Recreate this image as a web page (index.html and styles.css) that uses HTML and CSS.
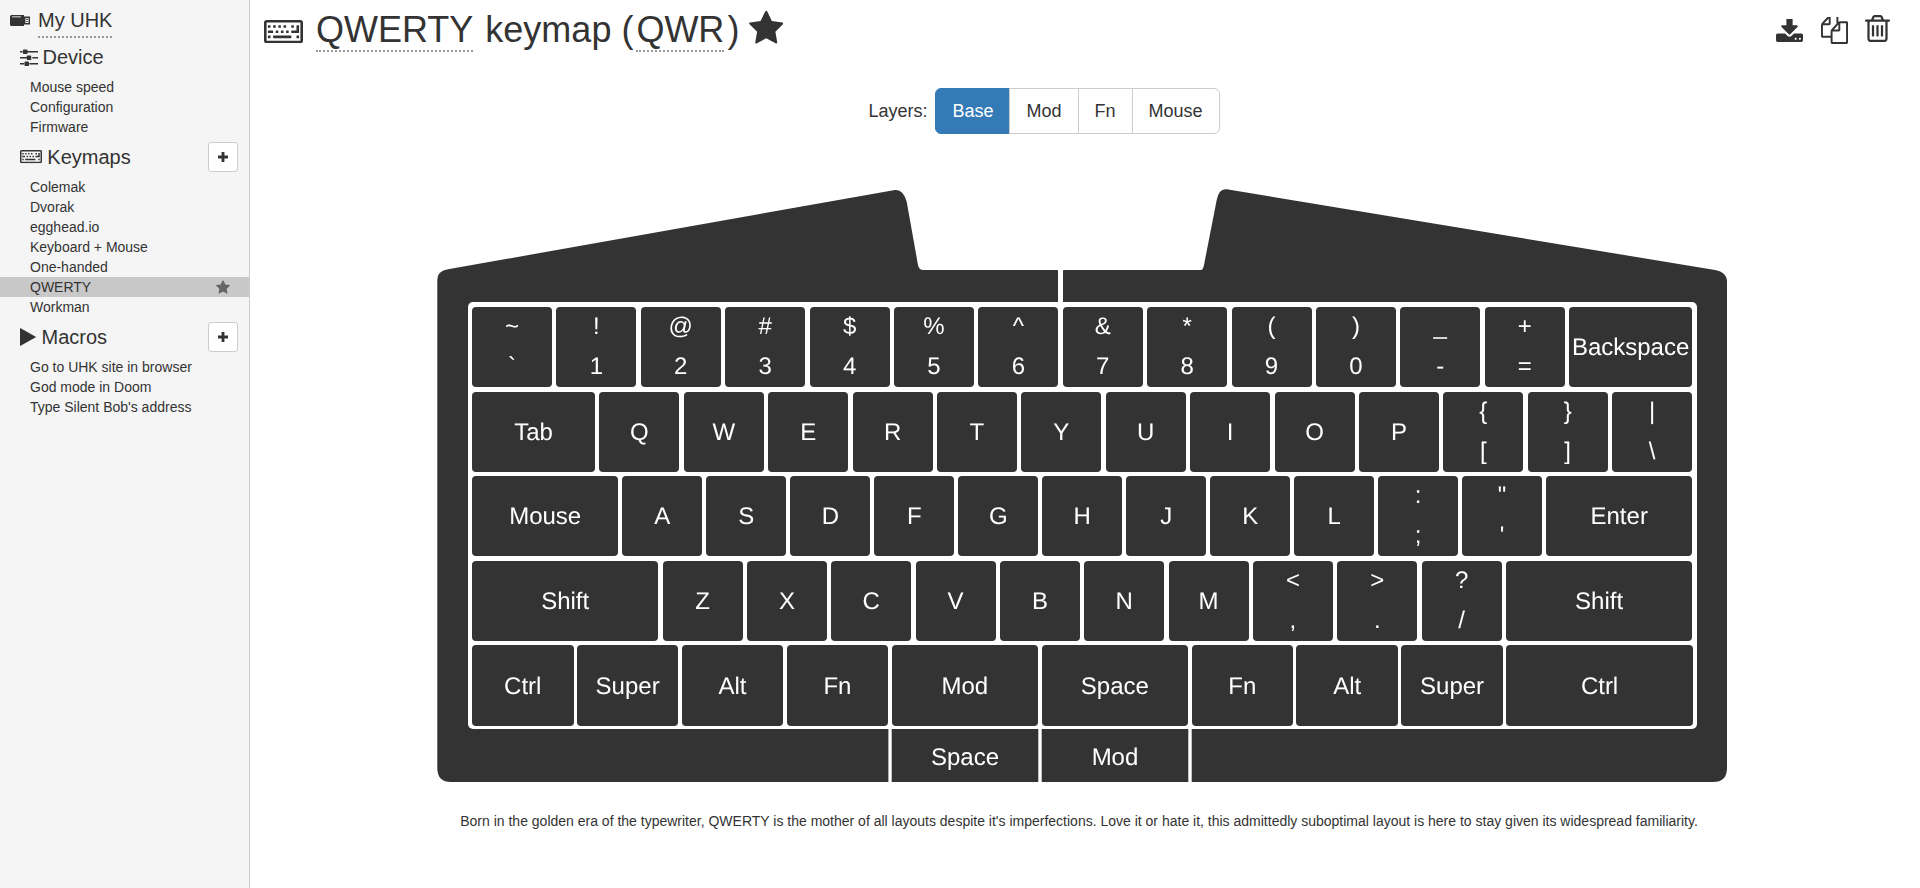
FILE: index.html
```html
<!DOCTYPE html>
<html lang="en">
<head>
<meta charset="utf-8">
<title>QWERTY keymap</title>
<link rel="stylesheet" href="styles.css">
</head>
<body>
<svg class="defs" aria-hidden="true">
  <symbol id="i-keyboard" viewBox="64 384 1920 1152"><path d="M384 1168v96q0 16-16 16h-96q-16 0-16-16v-96q0-16 16-16h96q16 0 16 16zm128-256v96q0 16-16 16h-224q-16 0-16-16v-96q0-16 16-16h224q16 0 16 16zm-128-256v96q0 16-16 16h-96q-16 0-16-16v-96q0-16 16-16h96q16 0 16 16zm1024 512v96q0 16-16 16h-864q-16 0-16-16v-96q0-16 16-16h864q16 0 16 16zm-640-256v96q0 16-16 16h-96q-16 0-16-16v-96q0-16 16-16h96q16 0 16 16zm-128-256v96q0 16-16 16h-96q-16 0-16-16v-96q0-16 16-16h96q16 0 16 16zm384 256v96q0 16-16 16h-96q-16 0-16-16v-96q0-16 16-16h96q16 0 16 16zm-128-256v96q0 16-16 16h-96q-16 0-16-16v-96q0-16 16-16h96q16 0 16 16zm384 256v96q0 16-16 16h-96q-16 0-16-16v-96q0-16 16-16h96q16 0 16 16zm-128-256v96q0 16-16 16h-96q-16 0-16-16v-96q0-16 16-16h96q16 0 16 16zm384 256v96q0 16-16 16h-96q-16 0-16-16v-96q0-16 16-16h96q16 0 16 16zm256 256v96q0 16-16 16h-96q-16 0-16-16v-96q0-16 16-16h96q16 0 16 16zm-256-512v96q0 16-16 16h-96q-16 0-16-16v-96q0-16 16-16h96q16 0 16 16zm256 0v352q0 16-16 16h-224q-16 0-16-16v-96q0-16 16-16h112v-240q0-16 16-16h96q16 0 16 16zm64 752v-896h-1664v896h1664zm128-896v896q0 53-37.5 90.5t-90.5 37.5h-1664q-53 0-90.5-37.5t-37.5-90.5v-896q0-53 37.5-90.5t90.5-37.5h1664q53 0 90.5 37.5t37.5 90.5z"/></symbol>
  <symbol id="i-star" viewBox="64 0 1664 1792"><path d="M1728 647q0 22-26 48l-363 354 86 500q1 7 1 20 0 21-10.5 35.5t-30.5 14.5q-19 0-40-12l-449-236-449 236q-22 12-40 12-21 0-31.5-14.5t-10.5-35.5q0-6 2-20l86-500-364-354q-25-27-25-48 0-37 56-46l502-73 225-455q19-41 49-41t49 41l225 455 502 73q56 9 56 46z"/></symbol>
  <symbol id="i-plus" viewBox="0 0 12 12"><path d="M4.3 0h3.4v4.3H12v3.4H7.7V12H4.3V7.7H0V4.3h4.3z"/></symbol>
</svg>

<div class="app">
  <nav class="side">
    <div class="brand">
      <svg class="usb" viewBox="0 0 20 11"><path d="M1.5 0H14v11H1.5A1.5 1.5 0 0 1 0 9.5v-8A1.5 1.5 0 0 1 1.5 0z"/><path fill="#f5f5f5" d="M2 1.4h9v.9H2z"/><path fill-rule="evenodd" d="M14 1.6h6v7.8h-6zM15.4 3v5h3.2V3zM16.2 3.8h1.6v1.1h-1.6zM16.2 6h1.6v1.1h-1.6z"/></svg>
      <span class="brand-name">My UHK</span>
    </div>

    <div class="sec-head sec-device">
      <svg class="ico-sliders" viewBox="128 128 1536 1536"><path d="M480 1408v128h-352v-128h352zm352-128q26 0 45 19t19 45v256q0 26-19 45t-45 19h-256q-26 0-45-19t-19-45v-256q0-26 19-45t45-19h256zm160-384v128h-864v-128h864zm-640-512v128h-224v-128h224zm1312 1024v128h-736v-128h736zm-960-1152q26 0 45 19t19 45v256q0 26-19 45t-45 19h-256q-26 0-45-19t-19-45v-256q0-26 19-45t45-19h256zm320 512q26 0 45 19t19 45v256q0 26-19 45t-45 19h-256q-26 0-45-19t-19-45v-256q0-26 19-45t45-19h256zm640 128v128h-480v-128h480zm0-512v128h-1056v-128h1056z"/></svg>
      <span>Device</span>
    </div>
    <ul class="sub">
      <li>Mouse speed</li>
      <li>Configuration</li>
      <li>Firmware</li>
    </ul>

    <div class="sec-head">
      <svg class="ico-kbd"><use href="#i-keyboard"/></svg>
      <span>Keymaps</span>
      <button class="add" type="button"><svg class="ico-plus"><use href="#i-plus"/></svg></button>
    </div>
    <ul class="sub">
      <li>Colemak</li>
      <li>Dvorak</li>
      <li>egghead.io</li>
      <li>Keyboard + Mouse</li>
      <li>One-handed</li>
      <li class="active">QWERTY<svg class="ico-fav"><use href="#i-star"/></svg></li>
      <li>Workman</li>
    </ul>

    <div class="sec-head">
      <svg class="ico-play" viewBox="192 128 1407 1536"><path d="M1576 927l-1328 738q-23 13-39.5 3t-16.5-36v-1472q0-26 16.5-36t39.5 3l1328 738q23 13 23 31t-23 31z"/></svg>
      <span>Macros</span>
      <button class="add" type="button"><svg class="ico-plus"><use href="#i-plus"/></svg></button>
    </div>
    <ul class="sub">
      <li>Go to UHK site in browser</li>
      <li>God mode in Doom</li>
      <li>Type Silent Bob's address</li>
    </ul>
  </nav>

  <main class="main">
    <header class="title-row">
      <svg class="title-kbd"><use href="#i-keyboard"/></svg>
      <h1 class="title"><span class="editable first">QWERTY</span> keymap (<span class="editable second">QWR</span>)</h1>
      <svg class="title-star"><use href="#i-star"/></svg>
      <div class="actions">
        <svg class="act-download" viewBox="64 128 1664 1536"><path d="M1344 1344q0-26-19-45t-45-19-45 19-19 45 19 45 45 19 45-19 19-45zm256 0q0-26-19-45t-45-19-45 19-19 45 19 45 45 19 45-19 19-45zm128-224v320q0 40-28 68t-68 28h-1472q-40 0-68-28t-28-68v-320q0-40 28-68t68-28h465l135 136q58 56 136 56t136-56l136-136h464q40 0 68 28t28 68zm-325-569q17 41-14 70l-448 448q-18 19-45 19t-45-19l-448-448q-31-29-14-70 17-39 59-39h256v-448q0-26 19-45t45-19h256q26 0 45 19t19 45v448h256q42 0 59 39z"/></svg>
        <svg class="act-copy" viewBox="0 128 1792 1664" preserveAspectRatio="none"><path d="M1696 384q40 0 68 28t28 68v1216q0 40-28 68t-68 28h-960q-40 0-68-28t-28-68v-288h-544q-40 0-68-28t-28-68v-672q0-40 20-88t48-76l408-408q28-28 76-48t88-20h416q40 0 68 28t28 68v328q68-40 128-40h416zm-544 213l-299 299h299v-299zm-640-384l-299 299h299v-299zm196 647l316-316v-416h-384v416q0 40-28 68t-68 28h-416v640h512v-256q0-40 20-88t48-76zm956 804v-1152h-384v416q0 40-28 68t-68 28h-416v640h896z"/></svg>
        <svg class="act-trash" viewBox="192 128 1408 1536"><path d="M704 736v576q0 14-9 23t-23 9h-64q-14 0-23-9t-9-23v-576q0-14 9-23t23-9h64q14 0 23 9t9 23zm256 0v576q0 14-9 23t-23 9h-64q-14 0-23-9t-9-23v-576q0-14 9-23t23-9h64q14 0 23 9t9 23zm256 0v576q0 14-9 23t-23 9h-64q-14 0-23-9t-9-23v-576q0-14 9-23t23-9h64q14 0 23 9t9 23zm128 724v-948h-896v948q0 22 7 40.5t14.5 27 10.5 8.5h832q3 0 10.5-8.5t14.5-27 7-40.5zm-672-1076h448l-48-117q-7-9-17-11h-317q-10 2-17 11zm928 32v64q0 14-9 23t-23 9h-96v948q0 83-47 143.5t-113 60.5h-832q-66 0-113-58.5t-47-141.5v-952h-96q-14 0-23-9t-9-23v-64q0-14 9-23t23-9h309l70-167q15-37 54-63t79-26h320q40 0 79 26t54 63l70 167h309q14 0 23 9t9 23z"/></svg>
      </div>
    </header>

    <div class="layers">
      <span class="layers-label">Layers:</span>
      <div class="btn-group">
        <button class="btn on" type="button">Base</button>
        <button class="btn next" type="button">Mod</button>
        <button class="btn" type="button">Fn</button>
        <button class="btn" type="button">Mouse</button>
      </div>
    </div>

    <section class="board">
      <svg class="board-bg" viewBox="0 0 1290 592" aria-hidden="true">
        <path class="shell" d="M0.3 90Q0.3 81 11 79.3L458 0Q466 -1 469.7 11.7L481 75Q482 80 486 80H620Q621 80 621 81V112H626V81Q626 80 627 80H764Q766 80 767 75L779.7 10Q782 -2 789.7 -.7L1278 80Q1290 82 1290 92V578Q1290 592 1276 592H14Q0.3 592 0.3 578Z"/>
        <rect class="plate" x="31" y="112" width="1229" height="427" rx="5"/>
        <rect class="plate" x="451.4" y="530" width="3.3" height="62"/>
        <rect class="plate" x="601.3" y="530" width="3.4" height="62"/>
        <rect class="plate" x="751.3" y="530" width="3.4" height="62"/>
      </svg>
      <div class="keys">
        <div class="row">
          <div class="key two"><span>~</span><span>`</span></div>
          <div class="key two"><span>!</span><span>1</span></div>
          <div class="key two"><span>@</span><span>2</span></div>
          <div class="key two"><span>#</span><span>3</span></div>
          <div class="key two"><span>$</span><span>4</span></div>
          <div class="key two"><span>%</span><span>5</span></div>
          <div class="key two"><span>^</span><span>6</span></div>
          <div class="key two"><span>&amp;</span><span>7</span></div>
          <div class="key two"><span>*</span><span>8</span></div>
          <div class="key two"><span>(</span><span>9</span></div>
          <div class="key two"><span>)</span><span>0</span></div>
          <div class="key two"><span>_</span><span>-</span></div>
          <div class="key two"><span>+</span><span>=</span></div>
          <div class="key w150">Backspace</div>
        </div>
        <div class="row">
          <div class="key w150">Tab</div>
          <div class="key">Q</div>
          <div class="key">W</div>
          <div class="key">E</div>
          <div class="key">R</div>
          <div class="key">T</div>
          <div class="key">Y</div>
          <div class="key">U</div>
          <div class="key">I</div>
          <div class="key">O</div>
          <div class="key">P</div>
          <div class="key two"><span>{</span><span>[</span></div>
          <div class="key two"><span>}</span><span>]</span></div>
          <div class="key two"><span>|</span><span>\</span></div>
        </div>
        <div class="row row-home">
          <div class="key w175">Mouse</div>
          <div class="key">A</div>
          <div class="key">S</div>
          <div class="key">D</div>
          <div class="key">F</div>
          <div class="key">G</div>
          <div class="key">H</div>
          <div class="key">J</div>
          <div class="key">K</div>
          <div class="key">L</div>
          <div class="key two"><span>:</span><span>;</span></div>
          <div class="key two"><span>"</span><span>'</span></div>
          <div class="key w175">Enter</div>
        </div>
        <div class="row row-shift">
          <div class="key w225">Shift</div>
          <div class="key">Z</div>
          <div class="key">X</div>
          <div class="key">C</div>
          <div class="key">V</div>
          <div class="key">B</div>
          <div class="key">N</div>
          <div class="key">M</div>
          <div class="key two"><span>&lt;</span><span>,</span></div>
          <div class="key two"><span>&gt;</span><span>.</span></div>
          <div class="key two"><span>?</span><span>/</span></div>
          <div class="key w225">Shift</div>
        </div>
        <div class="row row-mods">
          <div class="key m125">Ctrl</div>
          <div class="key m125">Super</div>
          <div class="key m125">Alt</div>
          <div class="key m125">Fn</div>
          <div class="key m175">Mod</div>
          <div class="key m175">Space</div>
          <div class="key m125">Fn</div>
          <div class="key m125">Alt</div>
          <div class="key m125">Super</div>
          <div class="key m225">Ctrl</div>
        </div>
        <div class="row row-thumb">
          <div class="key m175 thumb">Space</div>
          <div class="key m175 thumb">Mod</div>
        </div>
      </div>
    </section>

    <p class="desc">Born in the golden era of the typewriter, QWERTY is the mother of all layouts despite it's imperfections. Love it or hate it, this admittedly suboptimal layout is here to stay given its widespread familiarity.</p>
  </main>
</div>
</body>
</html>
```
FILE: styles.css
```css
* { box-sizing: border-box; }
html, body { margin: 0; height: 100%; }
body {
  font-family: "Liberation Sans", Arial, sans-serif;
  font-size: 14px;
  line-height: 20px;
  color: #333;
  background: #fff;
  overflow: hidden;
}
.defs { position: absolute; width: 0; height: 0; }
svg { display: block; fill: currentColor; flex: none; }

.app { display: flex; height: 888px; }

/* sidebar */
.side {
  width: 250px;
  flex: none;
  background: #f5f5f5;
  border-right: 1px solid #ccc;
  padding-top: 9px;
}
.brand {
  display: flex;
  align-items: center;
  gap: 8px;
  padding-left: 10px;
  font-size: 20px;
  line-height: 22px;
}
.usb { width: 20px; height: 11px; margin-bottom: 6px; }
.brand-name { border-bottom: 2px dotted #999; padding-bottom: 5px; }
.sec-head {
  display: flex;
  align-items: center;
  height: 30px;
  padding: 0 11px 0 20px;
  font-size: 20px;
  margin-top: 5px;
}
.sec-device { margin-top: 4px; }
.add {
  margin-left: auto;
  width: 30px;
  height: 30px;
  padding: 0;
  display: flex;
  align-items: center;
  justify-content: center;
  background: #fff;
  border: 1px solid #ccc;
  border-radius: 3px;
  color: #333;
}
.ico-plus { width: 10px; height: 10px; }
.ico-sliders { width: 18px; height: 18px; margin-right: 4.5px; }
.ico-kbd { width: 22px; height: 13.2px; margin-right: 5.3px; }
.ico-play { width: 16px; height: 18px; margin-right: 5.5px; }
.sub { list-style: none; margin: 5px 0 0; padding: 0; }
.sub li {
  display: flex;
  align-items: center;
  justify-content: space-between;
  height: 20px;
  padding: 0 19px 0 30px;
}
.sub li.active { background: #c8c8c8; }
.ico-fav { width: 14px; height: 15px; color: #666; }

/* main */
.main { flex: 1; min-width: 0; padding-right: 14px; }
.title-row {
  display: flex;
  align-items: flex-start;
  padding: 0 16px 0 14px;
  height: 88px;
}
.title-kbd { width: 39px; height: 23.4px; margin: 20px 0 0; }
.title {
  margin: 10px 0 0 13px;
  font-size: 36px;
  line-height: 40px;
  font-weight: 400;
  white-space: nowrap;
}
.editable { display: inline-block; border-bottom: 2px dotted #999; height: 41.5px; }
.editable.first { margin-right: 2px; }
.editable.second { margin: 0 3px; }
.title-star { width: 34.5px; height: 37px; margin: 10px 0 0 9.5px; }
.actions { margin-left: auto; display: flex; gap: 17px; padding-top: 15px; align-items: flex-start; }
.act-download { width: 27px; height: 25px; margin: 4px 1px 0 0; }
.act-copy { width: 27px; height: 27px; margin-top: 2px; }
.act-trash { width: 25px; height: 27px; }

.layers {
  display: flex;
  justify-content: center;
  align-items: center;
  gap: 8px;
  font-size: 18px;
  padding-right: 68px;
}
.btn-group { display: flex; }
.btn {
  font: inherit;
  font-size: 18px;
  line-height: 24px;
  padding: 10px 16px;
  background: #fff;
  color: #333;
  border: 1px solid #ccc;
  margin-left: -1px;
}
.btn:first-child { border-radius: 6px 0 0 6px; margin-left: 0; }
.btn:last-child { border-radius: 0 6px 6px 0; }
.btn.on { background: #337ab7; border-color: #337ab7; color: #fff; padding-right: 15px; }
.btn.next { padding-left: 17px; }

.board {
  position: relative;
  width: 1290px;
  height: 592px;
  margin: 56px 0 0 187px;
  padding: 116.7px 0 0 35px;
}
.board-bg { position: absolute; left: 0; top: 0; width: 1290px; height: 592px; overflow: visible; }
.shell { fill: #333; }
.plate { fill: #fff; }
.keys { position: relative; will-change: transform; }
.row { display: flex; gap: 4.4px; margin-bottom: 4.3px; }
.key {
  width: 80px;
  height: 80.3px;
  flex: none;
  display: flex;
  align-items: center;
  justify-content: center;
  padding-top: 2px;
  background: #333;
  color: #fff;
  border-radius: 4px;
  font-size: 24px;
  line-height: 40px;
  text-rendering: geometricPrecision;
}
.two { flex-direction: column; padding-top: 0; }
.two span { display: block; height: 40px; }
.w150 { width: 123px; }
.w175 { width: 146.4px; }
.w225 { width: 186.3px; }
.row-home { gap: 3.98px; }
.row-shift { gap: 4.33px; }
.row-mods { gap: 3.4px; }
.m125 { width: 101.5px; }
.m175 { width: 146.6px; }
.m225 { width: 186.7px; }
.row-thumb { gap: 3.4px; margin: 0 0 0 419.7px; }
.thumb { height: 52px; padding-top: 5px; }

.desc { margin: 29px 0 0; padding-left: 2px; text-align: center; }
```
